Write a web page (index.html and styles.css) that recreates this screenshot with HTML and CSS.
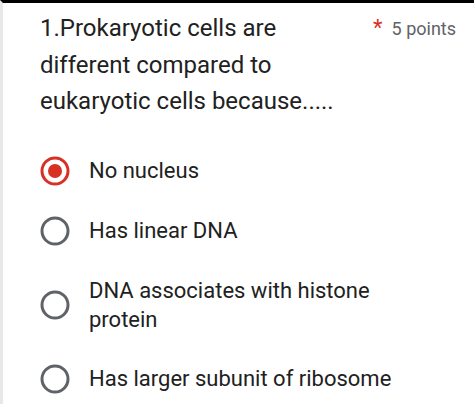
FILE: index.html
```html
<!DOCTYPE html>
<html>
<head>
<meta charset="utf-8">
<link rel="stylesheet" href="styles.css">
</head>
<body>
<div class="card">
  <div class="header">
    <div class="question">1.Prokaryotic cells are different compared to eukaryotic cells because.....</div>
    <div class="points"><span class="req">*</span><span class="pts">5 points</span></div>
  </div>
  <div class="options">
    <div class="option">
      <svg class="radio" width="30" height="30" viewBox="0 0 30 30"><circle cx="15" cy="15" r="13" fill="none" stroke="#d93025" stroke-width="3"/><circle cx="15" cy="15" r="7" fill="#d93025"/></svg>
      <div class="label">No nucleus</div>
    </div>
    <div class="option">
      <svg class="radio" width="30" height="30" viewBox="0 0 30 30"><circle cx="15" cy="15" r="13" fill="none" stroke="#5f6368" stroke-width="3"/></svg>
      <div class="label">Has linear DNA</div>
    </div>
    <div class="option">
      <svg class="radio" width="30" height="30" viewBox="0 0 30 30"><circle cx="15" cy="15" r="13" fill="none" stroke="#5f6368" stroke-width="3"/></svg>
      <div class="label">DNA associates with histone protein</div>
    </div>
    <div class="option">
      <svg class="radio" width="30" height="30" viewBox="0 0 30 30"><circle cx="15" cy="15" r="13" fill="none" stroke="#5f6368" stroke-width="3"/></svg>
      <div class="label">Has larger subunit of ribosome</div>
    </div>
  </div>
</div>
</body>
</html>
```

FILE: styles.css
```css
html, body {
  margin: 0;
  padding: 0;
  background: #ffffff;
}
body {
  font-family: Roboto, "Noto Sans", sans-serif;
  color: #212121;
  overflow: hidden;
}
.card {
  box-sizing: border-box;
  width: 474px;
  height: 404px;
  overflow: hidden;
  border-top: 3px solid #000000;
  border-left: 3px solid #e8e8e8;
  padding: 7px 18px 0 37px;
}
.header {
  display: flex;
  justify-content: space-between;
  align-items: flex-start;
}
.question {
  width: 310px;
  font-size: 24px;
  line-height: 36.5px;
}
.points {
  display: flex;
  align-items: flex-start;
  gap: 9px;
  padding-top: 7px;
  font-size: 18px;
  line-height: 24px;
}
.req {
  color: #d93025;
  font-size: 22px;
  line-height: 22px;
}
.pts {
  color: #5f6368;
}
.options {
  display: flex;
  flex-direction: column;
  margin-top: 21px;
}
.option {
  display: flex;
  align-items: center;
  gap: 19px;
  padding: 15px 0;
}
.radio {
  flex: none;
  display: block;
}
.label {
  width: 340px;
  font-size: 22px;
  line-height: 29px;
}
```
